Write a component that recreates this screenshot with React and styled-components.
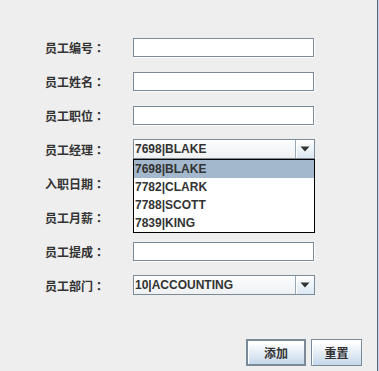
import React, { useState } from 'react';
import styled, { createGlobalStyle } from 'styled-components';

const GlobalStyle = createGlobalStyle`
  html, body {
    margin: 0;
    padding: 0;
    background: #c8d8e8;
  }
  body {
    font-family: "Liberation Sans", "Noto Sans CJK SC", sans-serif;
  }
`;

const Frame = styled.div`
  width: 379px;
  height: 371px;
  display: flex;
  background: #c8d8e8;
`;

const Content = styled.div`
  width: 377px;
  height: 371px;
  background: #eeeeee;
  border-right: 1px solid #4f6379;
  display: flex;
  flex-direction: column;
`;

const Form = styled.div`
  display: grid;
  grid-template-columns: 88px 182px;
  grid-auto-rows: 20px;
  row-gap: 14px;
  padding: 37px 0 0 45px;
`;

const Label = styled.div`
  display: flex;
  align-items: center;
  font-family: "Noto Sans CJK SC", sans-serif;
  font-weight: 700;
  font-size: 12px;
  color: #333333;
`;

const Colon = styled.span`
  font-family: "Noto Sans CJK TC", sans-serif;
`;

const Cell = styled.div`
  position: relative;
`;

const TextField = styled.input`
  box-sizing: border-box;
  width: 181px;
  height: 19px;
  margin: 0;
  padding: 0 3px;
  background: #ffffff;
  border: 1px solid #7a8a99;
  box-shadow: 1px 1px 0 #ffffff;
  outline: none;
  font: 12px "Liberation Sans", sans-serif;
`;

const ComboBox = styled.div`
  box-sizing: border-box;
  width: 182px;
  height: 20px;
  display: flex;
  border: 1px solid #7a8a99;
  background: linear-gradient(#fbfbfc, #eceff2);
`;

const ComboValue = styled.div`
  flex: 1;
  display: flex;
  align-items: center;
  padding-left: 1px;
  font-family: "Liberation Sans", sans-serif;
  font-weight: 700;
  font-size: 12px;
  color: #333333;
  border-right: 1px solid #9aa8b6;
  background: linear-gradient(#fdfdfd, #eef0f2);
  box-shadow: inset 1px 1px 0 #ffffff;
`;

const ArrowButton = styled.div`
  width: 18px;
  display: flex;
  align-items: center;
  justify-content: center;
  background: linear-gradient(#ffffff, #dce7f2);
  box-shadow: inset 1px 1px 0 #ffffff;
`;

const Popup = styled.div`
  position: absolute;
  left: 0;
  top: 20px;
  z-index: 5;
  box-sizing: border-box;
  width: 182px;
  border: 1px solid #000000;
  background: #ffffff;
`;

const PopupItem = styled.div`
  height: 18px;
  display: flex;
  align-items: center;
  padding-left: 1px;
  font-family: "Liberation Sans", sans-serif;
  font-weight: 700;
  font-size: 12px;
  color: #333333;
  background: ${({ $selected }) => ($selected ? '#a3b8cc' : '#ffffff')};
`;

const ButtonRow = styled.div`
  display: flex;
  justify-content: flex-end;
  gap: 5px;
  margin-top: 44px;
  padding-right: 15px;
`;

const Button = styled.button`
  box-sizing: border-box;
  width: ${({ $w }) => $w}px;
  height: 27px;
  margin: 0;
  padding: 0;
  font-family: "Noto Sans CJK SC", sans-serif;
  font-weight: 700;
  font-size: 12px;
  color: #333333;
  background: linear-gradient(#ffffff 10%, #c5d7ea);
  border: ${({ $default }) => ($default ? '2px solid #7a8a99' : '1px solid #7a8a99')};
  box-shadow: inset 1px 1px 0 #ffffff;
  cursor: pointer;
`;

const Arrow = () => (
  <svg width="10" height="6" viewBox="0 0 10 6">
    <path d="M0.5 0.5 H9.5 L5 5.5 Z" fill="#333333" />
  </svg>
);

const FieldLabel = ({ text }) => (
  <Label>
    {text}
    <Colon>：</Colon>
  </Label>
);

const Combo = ({ value, options, open }) => (
  <Cell>
    <ComboBox>
      <ComboValue>{value}</ComboValue>
      <ArrowButton>
        <Arrow />
      </ArrowButton>
    </ComboBox>
    {open && (
      <Popup>
        {options.map((o) => (
          <PopupItem key={o} $selected={o === value}>
            {o}
          </PopupItem>
        ))}
      </Popup>
    )}
  </Cell>
);

const managers = ['7698|BLAKE', '7782|CLARK', '7788|SCOTT', '7839|KING'];

export default function App() {
  const [open] = useState(true);
  return (
    <>
      <GlobalStyle />
      <Frame>
        <Content>
          <Form>
            <FieldLabel text="员工编号" />
            <Cell><TextField /></Cell>
            <FieldLabel text="员工姓名" />
            <Cell><TextField /></Cell>
            <FieldLabel text="员工职位" />
            <Cell><TextField /></Cell>
            <FieldLabel text="员工经理" />
            <Combo value="7698|BLAKE" options={managers} open={open} />
            <FieldLabel text="入职日期" />
            <Cell><TextField /></Cell>
            <FieldLabel text="员工月薪" />
            <Cell><TextField /></Cell>
            <FieldLabel text="员工提成" />
            <Cell><TextField /></Cell>
            <FieldLabel text="员工部门" />
            <Combo value="10|ACCOUNTING" options={[]} open={false} />
          </Form>
          <ButtonRow>
            <Button $w={60} $default>添加</Button>
            <Button $w={51}>重置</Button>
          </ButtonRow>
        </Content>
      </Frame>
    </>
  );
}
